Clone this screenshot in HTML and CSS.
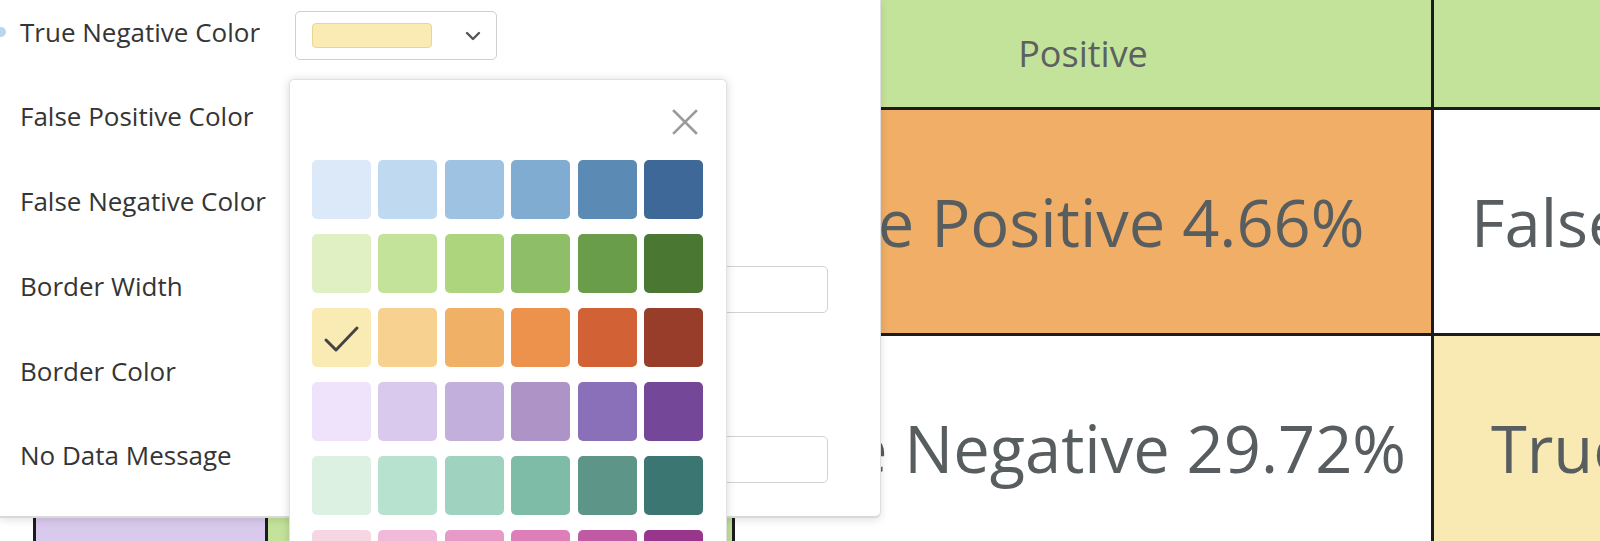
FILE: index.html
```html
<!DOCTYPE html>
<html lang="en">
<head>
<meta charset="utf-8">
<title>Confusion Matrix – Settings</title>
<link rel="stylesheet" href="styles.css">
</head>
<body>
<main class="stage">
  <div class="heatmap">
    <div class="hm-cell hm-blank"></div>
    <div class="hm-cell hm-blank"></div>
    <div class="hm-cell hm-head">Positive</div>
    <div class="hm-cell hm-head">Negative</div>

    <div class="hm-cell hm-axis"></div>
    <div class="hm-cell hm-rowhead"></div>
    <div class="hm-cell hm-data c-tp">True Positive 4.66%</div>
    <div class="hm-cell hm-data hm-right c-fp">False Positive 4.12%</div>

    <div class="hm-cell hm-rowhead"></div>
    <div class="hm-cell hm-data c-fn">False Negative 29.72%</div>
    <div class="hm-cell hm-data hm-right hm-right-tn c-tn">True Negative 61.5%</div>
  </div>

  <section class="settings">
    <span class="handle"></span>

    <label class="field-label">True Negative Color</label>
    <div class="control">
      <button class="color-select" type="button">
        <span class="chip chip-yellow"></span>
        <svg class="chevron" width="16" height="10" viewBox="0 0 16 10"><polyline points="2,2 8,8 14,2" fill="none" stroke="#555" stroke-width="2.4" stroke-linecap="round" stroke-linejoin="round"/></svg>
      </button>

      <div class="picker">
        <div class="picker-head">
          <button class="close" type="button" aria-label="Close">
            <svg width="26" height="26" viewBox="0 0 26 26"><path d="M2 2 L24 24 M24 2 L2 24" stroke="#9a9a9a" stroke-width="2.6" stroke-linecap="square"/></svg>
          </button>
        </div>
        <div class="swatches">
          <span class="sw" style="background:#dce9f9"></span>
          <span class="sw" style="background:#bfd9f1"></span>
          <span class="sw" style="background:#9dc2e2"></span>
          <span class="sw" style="background:#80acd1"></span>
          <span class="sw" style="background:#5b8bb5"></span>
          <span class="sw" style="background:#3d6897"></span>

          <span class="sw" style="background:#e1f0c3"></span>
          <span class="sw" style="background:#c4e39a"></span>
          <span class="sw" style="background:#add57d"></span>
          <span class="sw" style="background:#8fbe68"></span>
          <span class="sw" style="background:#699d49"></span>
          <span class="sw" style="background:#4a7832"></span>

          <span class="sw sw-selected" style="background:#faebb5"><svg width="59" height="59" viewBox="0 0 59 59"><polyline points="14,32 24,42 45,20" fill="none" stroke="#444" stroke-width="3" stroke-linecap="round" stroke-linejoin="round"/></svg></span>
          <span class="sw" style="background:#f6d18f"></span>
          <span class="sw" style="background:#f0b066"></span>
          <span class="sw" style="background:#ec924c"></span>
          <span class="sw" style="background:#d26236"></span>
          <span class="sw" style="background:#993d2b"></span>

          <span class="sw" style="background:#efe2fb"></span>
          <span class="sw" style="background:#d9c9ec"></span>
          <span class="sw" style="background:#c3afdb"></span>
          <span class="sw" style="background:#ae94c6"></span>
          <span class="sw" style="background:#8a70b8"></span>
          <span class="sw" style="background:#744799"></span>

          <span class="sw" style="background:#dcf1e1"></span>
          <span class="sw" style="background:#b7e2cf"></span>
          <span class="sw" style="background:#9fd3bf"></span>
          <span class="sw" style="background:#7fbca8"></span>
          <span class="sw" style="background:#5d9689"></span>
          <span class="sw" style="background:#3c7672"></span>

          <span class="sw" style="background:#f6d6e2"></span>
          <span class="sw" style="background:#f1b9da"></span>
          <span class="sw" style="background:#e79ac8"></span>
          <span class="sw" style="background:#df7fba"></span>
          <span class="sw" style="background:#c05aa4"></span>
          <span class="sw" style="background:#99358a"></span>
        </div>
      </div>
    </div>

    <label class="field-label">False Positive Color</label>
    <div class="control">
      <button class="color-select" type="button">
        <span class="chip chip-orange"></span>
        <svg class="chevron" width="16" height="10" viewBox="0 0 16 10"><polyline points="2,2 8,8 14,2" fill="none" stroke="#555" stroke-width="2.4" stroke-linecap="round" stroke-linejoin="round"/></svg>
      </button>
    </div>

    <label class="field-label">False Negative Color</label>
    <div class="control">
      <button class="color-select" type="button">
        <span class="chip chip-white"></span>
        <svg class="chevron" width="16" height="10" viewBox="0 0 16 10"><polyline points="2,2 8,8 14,2" fill="none" stroke="#555" stroke-width="2.4" stroke-linecap="round" stroke-linejoin="round"/></svg>
      </button>
    </div>

    <label class="field-label">Border Width</label>
    <div class="control">
      <input class="text-input" type="text" value="">
    </div>

    <label class="field-label">Border Color</label>
    <div class="control">
      <button class="color-select" type="button">
        <span class="chip chip-black"></span>
        <svg class="chevron" width="16" height="10" viewBox="0 0 16 10"><polyline points="2,2 8,8 14,2" fill="none" stroke="#555" stroke-width="2.4" stroke-linecap="round" stroke-linejoin="round"/></svg>
      </button>
    </div>

    <label class="field-label">No Data Message</label>
    <div class="control">
      <input class="text-input" type="text" value="">
    </div>
  </section>
</main>
</body>
</html>
```

FILE: styles.css
```css
* { box-sizing: border-box; }

html, body {
  margin: 0;
  padding: 0;
  background: #ffffff;
}

body {
  font-family: "Open Sans", "Noto Sans", "Liberation Sans", sans-serif;
  color: #343434;
}

.stage {
  position: relative;
  width: 1600px;
  height: 541px;
  overflow: hidden;
}

/* ---------- heatmap (background widget) ---------- */
.heatmap {
  display: grid;
  grid-template-columns: 229px 464px 696px 696px;
  grid-template-rows: 107px 223px 223px;
  gap: 3px;
  width: max-content;
  margin-left: 33px;
  padding: 0 3px 3px 3px;
  background: #1c1c1c;
}

.hm-cell {
  display: flex;
  align-items: center;
  justify-content: center;
  color: #585d60;
  white-space: nowrap;
  overflow: hidden;
  background: #ffffff;
}

.hm-head {
  background: #c4e39a;
  font-size: 36px;
  color: #5b6161;
}

.hm-axis {
  grid-row: span 2;
  background: #d9c9ec;
}

.hm-rowhead {
  background: #c4e39a;
}

.hm-data {
  font-size: 65px;
  padding-right: 26px;
}

.hm-right {
  justify-content: flex-start;
  padding-right: 0;
  padding-left: 37px;
}

.hm-right-tn { padding-left: 57px; }

.c-tp { background: #f0ae66; }
.c-fp { background: #ffffff; }
.c-fn { background: #ffffff; }
.c-tn { background: #f9eab4; }

/* ---------- settings panel ---------- */
.settings {
  position: absolute;
  top: 0;
  left: 0;
  width: 881px;
  height: 518px;
  padding: 11px 52px 0 20px;
  background: #ffffff;
  border-right: 1px solid #dedede;
  border-bottom: 2px solid #d9d9d9;
  border-bottom-right-radius: 6px;
  box-shadow: 0 2px 8px rgba(0, 0, 0, 0.12);
  display: grid;
  grid-template-columns: 275px 1fr;
  grid-auto-rows: 49px;
  row-gap: 35.8px;
  align-items: start;
  z-index: 2;
}

.handle {
  position: absolute;
  left: -4px;
  top: 27px;
  width: 10px;
  height: 10px;
  border-radius: 50%;
  background: #b9d6ef;
}

.field-label {
  font-size: 26px;
  line-height: 35px;
  padding-top: 3.5px;
  color: #353535;
  white-space: nowrap;
}

.control {
  position: relative;
  height: 49px;
  display: flex;
  align-items: center;
}

.color-select {
  width: 202px;
  height: 49px;
  padding: 0 15px 0 15.5px;
  border: 1.5px solid #cfcfcf;
  border-radius: 5px;
  background: #ffffff;
  display: flex;
  align-items: center;
  justify-content: space-between;
  cursor: pointer;
}

.chip {
  display: block;
  width: 120px;
  height: 25px;
  border-radius: 4px;
  border: 1px solid rgba(0, 0, 0, 0.08);
}

.chip-yellow { background: #faebb5; border-color: #e9d690; }
.chip-orange { background: #f0ae66; }
.chip-white { background: #ffffff; border-color: #dddddd; }
.chip-black { background: #1c1c1c; }

.chevron { display: block; margin-top: 1px; }

.text-input {
  width: 100%;
  height: 47px;
  border: 1.5px solid #d2d2d2;
  border-radius: 5px;
  background: #ffffff;
  font: inherit;
  font-size: 22px;
}

/* ---------- colour picker popover ---------- */
.picker {
  position: absolute;
  top: 68px;
  left: -6px;
  width: 438px;
  padding: 29px 22px 24px 22px;
  background: #ffffff;
  border: 1px solid #e1e1e1;
  border-radius: 5px;
  box-shadow: 0 1px 10px rgba(0, 0, 0, 0.16);
  z-index: 3;
}

.picker-head {
  display: flex;
  justify-content: flex-end;
}

.close {
  width: 26px;
  height: 26px;
  margin-right: 6px;
  padding: 0;
  border: 0;
  background: transparent;
  cursor: pointer;
}

.close svg { display: block; }

.swatches {
  margin-top: 25px;
  display: grid;
  grid-template-columns: repeat(6, 59px);
  grid-auto-rows: 59px;
  column-gap: 7.4px;
  row-gap: 15px;
}

.sw {
  display: block;
  border-radius: 5px;
}

.sw-selected svg { display: block; }
```
